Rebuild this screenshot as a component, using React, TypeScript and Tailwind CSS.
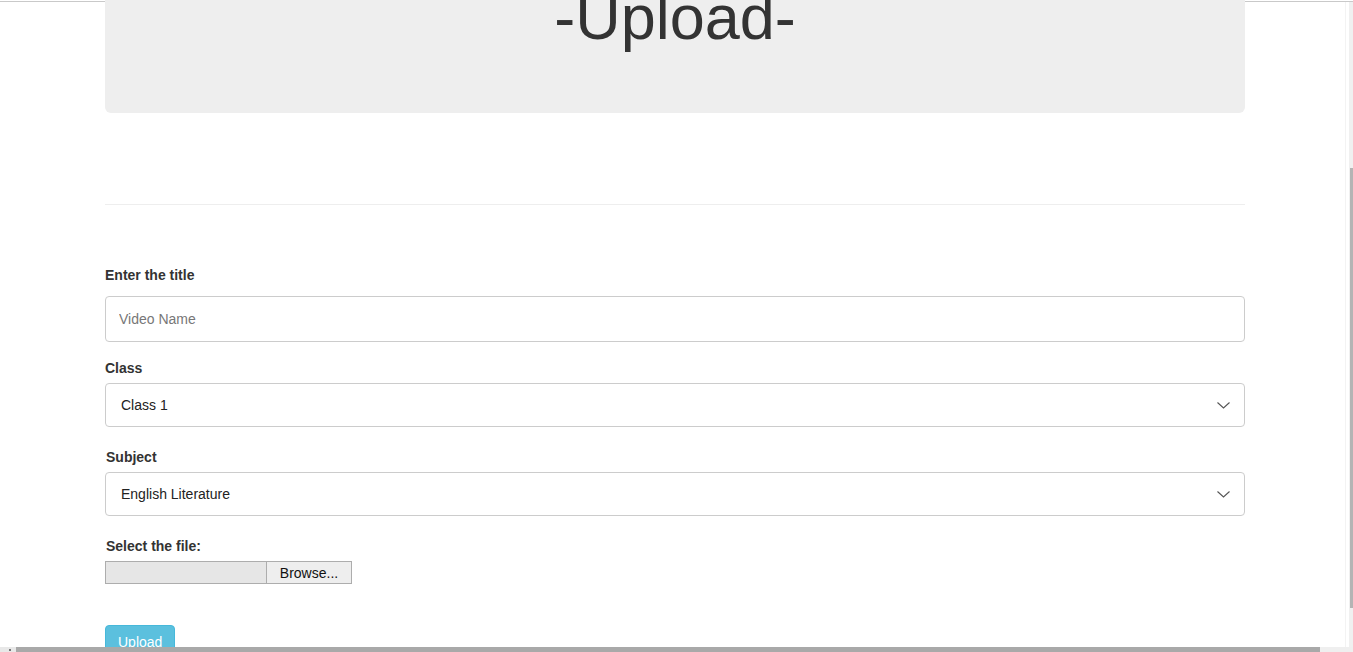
function FieldLabel({ children, className = '' }: { children: React.ReactNode; className?: string }) {
  return (
    <label className={`block text-[14px] font-bold leading-5 text-[#333] ${className}`}>{children}</label>
  );
}

function Chevron() {
  return (
    <svg width="13" height="7" viewBox="0 0 13 7" fill="none" className="text-[#555]">
      <path d="M0.5 0.5L6.5 6L12.5 0.5" stroke="currentColor" strokeWidth="1.1" />
    </svg>
  );
}

function SelectBox({ value, className = '' }: { value: string; className?: string }) {
  return (
    <div
      className={`flex h-[44px] items-center justify-between rounded-[4px] border border-[#ccc] bg-white pl-[15px] pr-[14px] text-[14px] leading-5 text-[#222] ${className}`}
    >
      <span>{value}</span>
      <Chevron />
    </div>
  );
}

export default function App() {
  return (
    <div className="relative h-[652px] overflow-hidden bg-white font-['Liberation_Sans',Arial,sans-serif] text-[#333]">
      {/* window frame edge */}
      <div className="h-[2px] border-b border-[#c9c9c9] bg-white" />

      <div className="ml-[105px] w-[1140px]">
        <div className="-mt-[67px] rounded-[6px] bg-[#eee] pb-[61px] pt-[48px] text-center">
          <h1 className="text-[63px] font-normal leading-[69px] text-[#333]">-Upload-</h1>
        </div>

        <hr className="mt-[91px] border-0 border-t border-[#eee]" />

        <form onSubmit={(e) => e.preventDefault()}>
          <FieldLabel className="mt-[60px]">Enter the title</FieldLabel>
          <input
            type="text"
            placeholder="Video Name"
            className="mt-[11px] block h-[46px] w-full rounded-[4px] border border-[#ccc] bg-white pl-[13px] text-[14px] leading-5 text-[#555] outline-none placeholder:text-[#777]"
          />

          <FieldLabel className="mt-[16px]">Class</FieldLabel>
          <SelectBox value="Class 1" className="mt-[5px]" />

          <FieldLabel className="mt-[20px] pl-px">Subject</FieldLabel>
          <SelectBox value="English Literature" className="mt-[5px]" />

          <FieldLabel className="mt-[20px] pl-px">Select the file:</FieldLabel>
          <div className="mt-[5px] flex h-[23px] w-[247px]">
            <div className="w-[161px] border border-r-0 border-[#adadad] bg-[#e6e6e6]" />
            <button
              type="button"
              className="flex-1 border border-[#adadad] bg-[#eeeeee] text-[14px] leading-5 text-[#111]"
            >
              Browse...
            </button>
          </div>

          <button
            type="submit"
            className="mt-[41px] h-[34px] rounded-[4px] border border-[#46b8da] bg-[#5bc0de] px-3 text-[14px] leading-5 text-white"
          >
            Upload
          </button>
        </form>
      </div>

      {/* vertical scrollbar */}
      <div className="absolute right-[7px] top-[2px] bottom-[5px] w-px bg-[#f3f3f3]" />
      <div className="absolute right-0 top-[2px] bottom-[5px] w-[4px] bg-[#f0f0f0]" />
      <div className="absolute right-0 top-[168px] h-[440px] w-[3px] bg-[#b4b4b4]" />

      {/* horizontal scrollbar */}
      <div className="absolute bottom-0 left-0 right-0 flex h-[5px] bg-[#e8e8e8]">
        <div className="w-[16px] pl-[9px] pt-[2px]">
          <div className="h-[2px] w-[2px] bg-[#777]" />
        </div>
        <div className="w-[1304px] bg-[#a9a9a9]" />
        <div className="flex-1 bg-[#efefef]" />
      </div>
    </div>
  );
}
